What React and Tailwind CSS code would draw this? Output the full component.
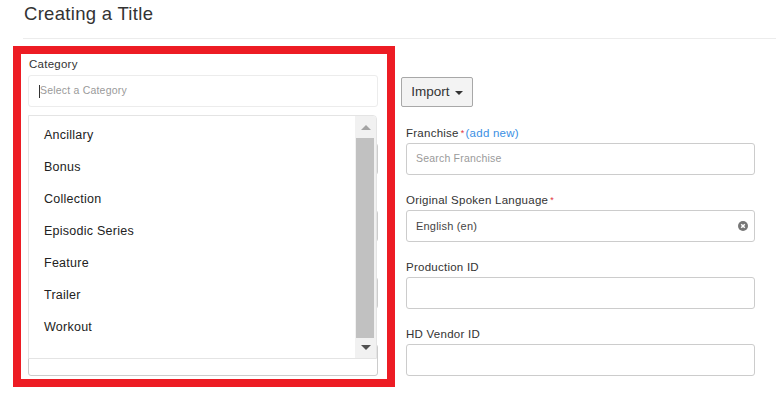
import React from 'react';

const categories = ['Ancillary', 'Bonus', 'Collection', 'Episodic Series', 'Feature', 'Trailer', 'Workout'];

const Label = ({ children, className = '' }) => (
  <div className={`h-[16px] pt-px text-[11.5px] leading-[16px] tracking-[0.25px] text-[#333] ${className}`}>{children}</div>
);

const Field = ({ label, children, first }) => (
  <div className={first ? 'mt-[17px]' : 'mt-[16px]'}>
    <Label>{label}</Label>
    <div className="mt-[3px] h-[32px] rounded-[3px] border border-[#cccccc] bg-white flex items-center px-[9px] relative">
      {children}
    </div>
  </div>
);

const Required = () => <span className="text-[#e2333a] text-[9px] align-top ml-[2px]">*</span>;

const CategoryDropdown = () => (
  <div className="absolute left-[7px] top-[61px] w-[349px] h-[244px] bg-white border border-[#e4e4e4] rounded-tr-[4px] overflow-hidden">
    <ul className="pt-[3px]">
      {categories.map((c) => (
        <li key={c} className="h-[32px] flex items-center pl-[15px] text-[12.5px] tracking-[0.25px] text-[#222]">
          {c}
        </li>
      ))}
    </ul>
    {/* fake scrollbar */}
    <div className="absolute right-0 top-0 bottom-0 w-[21px] bg-[#f1f1f1]">
      <div className="h-[22px] flex items-center justify-center">
        <svg width="10" height="5" viewBox="0 0 10 5"><path d="M0 5 L5 0 L10 5 Z" fill="#a3a3a3" /></svg>
      </div>
      <div className="absolute left-[1px] right-[2px] top-[22px] h-[200px] bg-[#c1c1c1]" />
      <div className="absolute bottom-0 left-0 right-0 h-[22px] flex items-center justify-center">
        <svg width="10" height="5" viewBox="0 0 10 5"><path d="M0 0 L10 0 L5 5 Z" fill="#505050" /></svg>
      </div>
    </div>
  </div>
);

export default function App() {
  return (
    <div className="w-[776px] h-[394px] bg-white overflow-hidden" style={{ fontFamily: '"Liberation Sans", Arial, sans-serif' }}>
      <h1 className="ml-[24px] mt-[2px] h-[24px] text-[18.5px] leading-[24px] tracking-[0.3px] text-[#333]">Creating a Title</h1>
      <div className="ml-[23px] mt-[12px] h-px bg-[#ececec]" />

      <div className="flex items-start mt-[7px] ml-[13px]">
        {/* left column, highlighted; fields behind the open menu */}
        <div className="relative w-[382px] h-[341px] border-8 border-[#ed1c24] pt-px pl-[7px] pr-[9px]">
          <Label className="ml-px">Category</Label>
          <div className="mt-[4px] h-[32px] rounded-[3px] border border-[#ececec] flex items-center pl-[10px]">
            <span className="w-px h-[13px] bg-[#333]" />
            <span className="text-[10.5px] tracking-[0.2px] text-[#9a9a9a]">Select a Category</span>
          </div>
          <Field label="" first />
          <Field label="" />
          <Field label="" />
          <Field label="" />
          <CategoryDropdown />
        </div>

        {/* right column */}
        <div className="w-[354px] ml-[6px]">
          <button className="mt-[31px] h-[30px] w-[72px] rounded-[2px] border border-[#a8a8a8] bg-[#f3f3f3] flex items-center justify-center gap-[5px] pt-px text-[13.5px] text-[#333]">
            Import
            <svg width="8" height="4" viewBox="0 0 8 4"><path d="M0 0 L8 0 L4 4 Z" fill="#333" /></svg>
          </button>
          <div className="pl-[5px]">
            <Field label={<>Franchise<Required /><span className="text-[#3b8fe3] ml-[1px]">(add new)</span></>} first>
              <span className="text-[10.5px] tracking-[0.2px] text-[#9a9a9a]">Search Franchise</span>
            </Field>
            <Field label={<>Original Spoken Language<Required /></>}>
              <span className="text-[11px] tracking-[0.2px] text-[#444]">English (en)</span>
              <svg className="absolute right-[6px]" width="10" height="10" viewBox="0 0 10 10">
                <circle cx="5" cy="5" r="5" fill="#777" />
                <path d="M3.2 3.2 L6.8 6.8 M6.8 3.2 L3.2 6.8" stroke="#fff" strokeWidth="1.5" />
              </svg>
            </Field>
            <Field label="Production ID" />
            <Field label="HD Vendor ID" />
          </div>
        </div>
      </div>
    </div>
  );
}
